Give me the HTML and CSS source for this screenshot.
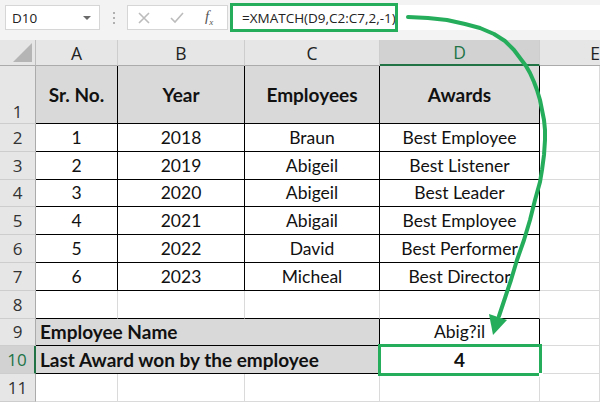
FILE: index.html
```html
<!DOCTYPE html>
<html>
<head>
<meta charset="utf-8">
<link rel="stylesheet" href="styles.css">
</head>
<body>
<div class="page">
  <div class="toolbar">
    <div class="namebox"><span class="nb-text">D10</span><span class="nb-arrow"></span></div>
    <div class="dots"><span></span><span></span><span></span></div>
    <div class="fxbox">
      <svg class="ic" width="14" height="14" viewBox="0 0 14 14"><path d="M2 2 L12 12 M12 2 L2 12" stroke="#bcbcbc" stroke-width="1.6" fill="none"/></svg>
      <svg class="ic" width="16" height="14" viewBox="0 0 16 14"><path d="M2 7 L6 11 L14 2" stroke="#bcbcbc" stroke-width="1.6" fill="none"/></svg>
      <span class="fx">f<sub>x</sub></span>
    </div>
    <div class="formula"><span class="ftext">=XMATCH(D9,C2:C7,2,-1)</span></div>
    <div class="fhl"></div>
  </div>
  <div class="sheet">
    <div class="corner"><span class="tri"></span></div>
    <div class="ch">A</div>
    <div class="ch">B</div>
    <div class="ch">C</div>
    <div class="ch sel">D</div>
    <div class="ch che">E</div>

    <div class="rh bottom">1</div>
    <div class="c t hd">Sr. No.</div>
    <div class="c t hd">Year</div>
    <div class="c t hd">Employees</div>
    <div class="c t hd">Awards</div>
    <div class="c"></div>

    <div class="rh">2</div>
    <div class="c t">1</div><div class="c t">2018</div><div class="c t">Braun</div><div class="c t">Best Employee</div><div class="c"></div>
    <div class="rh">3</div>
    <div class="c t">2</div><div class="c t">2019</div><div class="c t">Abigeil</div><div class="c t">Best Listener</div><div class="c"></div>
    <div class="rh">4</div>
    <div class="c t">3</div><div class="c t">2020</div><div class="c t">Abigeil</div><div class="c t">Best Leader</div><div class="c"></div>
    <div class="rh">5</div>
    <div class="c t">4</div><div class="c t">2021</div><div class="c t">Abigail</div><div class="c t">Best Employee</div><div class="c"></div>
    <div class="rh">6</div>
    <div class="c t">5</div><div class="c t">2022</div><div class="c t">David</div><div class="c t">Best Performer</div><div class="c"></div>
    <div class="rh">7</div>
    <div class="c t">6</div><div class="c t">2023</div><div class="c t">Micheal</div><div class="c t">Best Director</div><div class="c"></div>

    <div class="rh">8</div>
    <div class="c bb"></div><div class="c bb"></div><div class="c bb"></div><div class="c bb"></div><div class="c"></div>

    <div class="rh">9</div>
    <div class="c t hd left span3">Employee Name</div>
    <div class="c t">Abig?il</div>
    <div class="c"></div>

    <div class="rh sel">10</div>
    <div class="c t hd left span3">Last Award won by the employee</div>
    <div class="c t b selcell">4<span class="handle"></span></div>
    <div class="c"></div>

    <div class="rh">11</div>
    <div class="c"></div><div class="c"></div><div class="c"></div><div class="c"></div><div class="c"></div>
  </div>
  <svg class="arrow" width="600" height="402" viewBox="0 0 600 402">
    <polyline points="408,17 428,18 447,20 465,24 480,28 494,34 505,41 514,50 520,58 526,66 530,73 534,82 537,90 540,100 542,110 544,120 545,130 545,140 544,155 542,170 540,182 535,200 530,220 524,240 517,260 511,280 505,298 499,316" fill="none" stroke="#25ad5c" stroke-width="4" stroke-linecap="round" stroke-linejoin="round"/>
    <polygon points="489,314 507,320 493,335" fill="#25ad5c"/>
  </svg>
</div>
</body>
</html>
```
FILE: styles.css
```css
html, body {
  margin: 0;
  padding: 0;
}
body {
  width: 600px;
  height: 402px;
  overflow: hidden;
  background: #ffffff;
  font-family: "Lato", "Open Sans", sans-serif;
}
.page {
  position: relative;
  width: 600px;
  height: 402px;
  overflow: hidden;
}
.toolbar {
  position: relative;
  height: 40px;
  background: #f3f3f3;
  display: flex;
  align-items: flex-start;
  padding-top: 5px;
  box-sizing: border-box;
}
.namebox {
  margin-left: 5px;
  width: 95px;
  height: 25px;
  background: #fff;
  border: 1px solid #d6d6d6;
  box-sizing: border-box;
  display: flex;
  align-items: center;
  justify-content: space-between;
  padding: 0 8px 0 6px;
  font-family: "Open Sans", sans-serif;
  font-size: 13.5px;
  color: #222;
}
.nb-arrow {
  width: 0;
  height: 0;
  border-left: 4px solid transparent;
  border-right: 4px solid transparent;
  border-top: 4px solid #6a6a6a;
}
.dots {
  width: 27px;
  height: 25px;
  display: flex;
  flex-direction: column;
  align-items: center;
  justify-content: center;
  gap: 3px;
}
.dots span {
  width: 2px;
  height: 2px;
  background: #b0b0b0;
}
.fxbox {
  width: 101px;
  height: 25px;
  background: #fff;
  border: 1px solid #d6d6d6;
  box-sizing: border-box;
  display: flex;
  align-items: center;
  padding-left: 9px;
  gap: 18px;
}
.fx {
  font-family: "Liberation Serif", serif;
  font-style: italic;
  font-size: 15px;
  color: #555;
  margin-left: 2px;
}
.fx sub {
  font-size: 9px;
}
.formula {
  margin-left: 2px;
  flex: 1;
  height: 25px;
  background: #fff;
  border-left: 1px solid #d6d6d6;
  display: flex;
  align-items: center;
  padding-left: 11px;
  font-family: "Open Sans", sans-serif;
  font-size: 13.5px;
  color: #222;
}
.fhl {
  position: absolute;
  left: 230px;
  top: 3px;
  width: 168px;
  height: 29px;
  border: 3px solid #25ad5c;
  box-sizing: border-box;
}
.sheet {
  display: grid;
  grid-template-columns: 36px 82px 127px 135px 160px 60px;
  grid-template-rows: 26px 58px repeat(10, 27.8px);
}
.corner {
  background: #e6e6e6;
  border-right: 1px solid #bdbdbd;
  border-bottom: 1px solid #ababab;
  position: relative;
}
.tri {
  position: absolute;
  right: 3px;
  bottom: 3px;
  width: 0;
  height: 0;
  border-left: 19px solid transparent;
  border-bottom: 19px solid #b5b5b5;
}
.ch {
  background: #e6e6e6;
  border-right: 1px solid #cdcdcd;
  border-bottom: 1px solid #ababab;
  display: flex;
  align-items: center;
  justify-content: center;
  font-family: "Open Sans", sans-serif;
  font-size: 17.5px;
  color: #222;
  box-sizing: border-box;
}
.ch.che {
  justify-content: flex-end;
  padding-right: 0;
  border-right: none;
}
.ch.sel {
  background: #d2d2d2;
  color: #217346;
  border-bottom: 2px solid #217346;
}
.rh {
  background: #e6e6e6;
  border-right: 1px solid #ababab;
  border-bottom: 1px solid #cdcdcd;
  display: flex;
  align-items: center;
  justify-content: center;
  font-family: "Open Sans", sans-serif;
  font-size: 17px;
  color: #333;
  box-sizing: border-box;
}
.rh.bottom {
  align-items: flex-end;
  padding-bottom: 0;
}
.rh.sel {
  background: #d2d2d2;
  color: #217346;
  border-right: 2px solid #217346;
}
.c {
  border-right: 1px solid #dadada;
  border-bottom: 1px solid #dadada;
  display: flex;
  align-items: center;
  justify-content: center;
  font-size: 17.5px;
  color: #111;
  box-sizing: border-box;
  white-space: nowrap;
}
.c.t {
  border-right-color: #000;
  border-bottom-color: #000;
}
.c.bb {
  border-bottom-color: #000;
}
.c.hd {
  background: #d9d9d9;
  font-weight: 700;
  font-size: 19px;
}
.c.b {
  font-weight: 700;
  font-size: 19px;
}
.c.left {
  justify-content: flex-start;
  padding-left: 4px;
}
.span3 {
  grid-column: span 3;
}
.selcell {
  position: relative;
  outline: 3px solid #25ad5c;
  outline-offset: -1px;
}
.handle {
  position: absolute;
  right: -4px;
  bottom: -4px;
  width: 4px;
  height: 4px;
  background: #fff;
}
.arrow {
  position: absolute;
  left: 0;
  top: 0;
  pointer-events: none;
}
```
